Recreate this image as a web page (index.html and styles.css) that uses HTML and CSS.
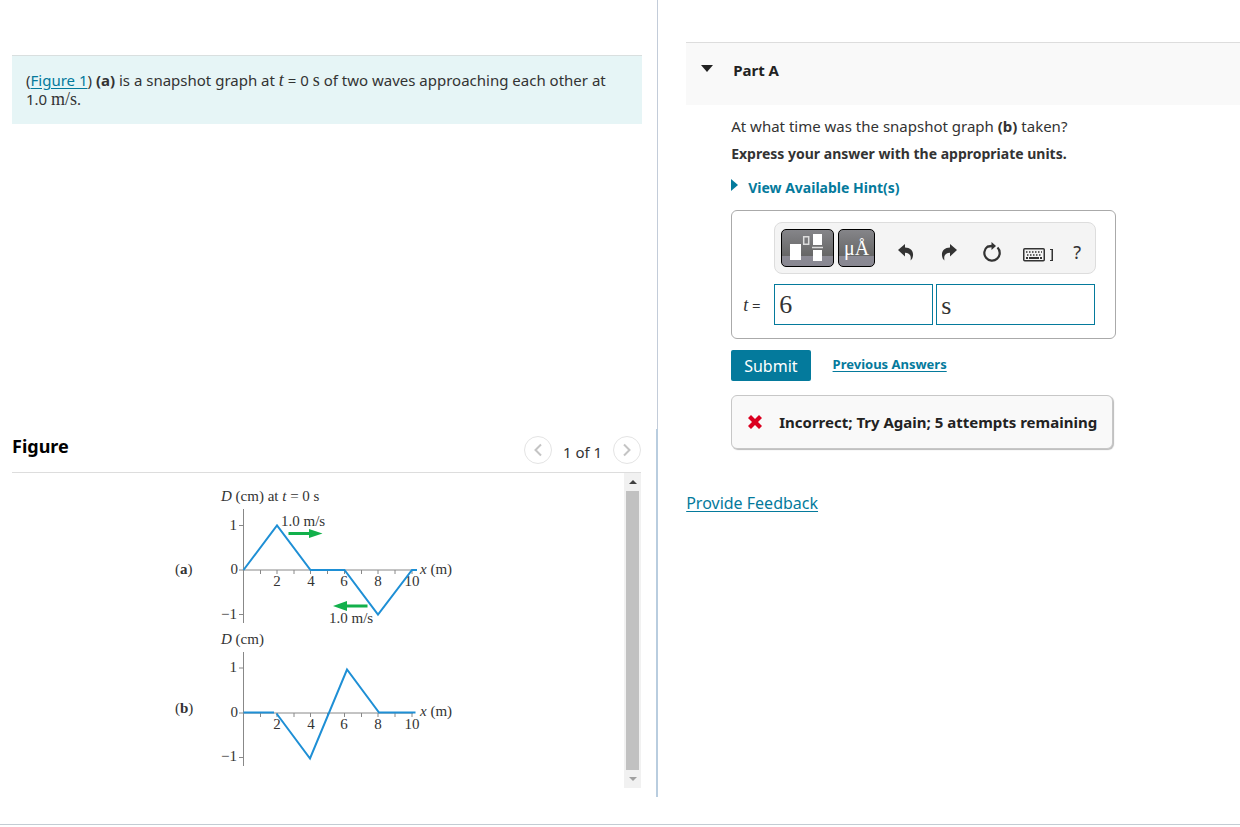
FILE: index.html
```html
<!DOCTYPE html>
<html lang="en">
<head>
  <meta charset="UTF-8" />
  <meta name="viewport" content="width=device-width, initial-scale=1" />
  <title>Part A</title>
  <link rel="stylesheet" href="styles.css">
</head>
<body>
  <div class="page">
    <!-- Left: problem text and figure -->
    <div class="left-pane">
      <section class="problem">
        <p class="intro">(<a href="#figure">Figure 1</a>) <b>(a)</b> is a snapshot graph at <i class="math">t</i> = 0 <span class="math">s</span> of two waves approaching each other at 1.0 <span class="math">m/s</span>.</p>
      </section>

      <section class="figure-panel" id="figure">
        <header class="figure-header">
          <h2>Figure</h2>
          <nav class="pager">
            <button type="button" aria-label="Previous figure">
              <svg width="10" height="14" viewBox="0 0 10 14"><path d="M8 1.5 2.5 7 8 12.5" /></svg>
            </button>
            <span>1 of 1</span>
            <button type="button" aria-label="Next figure">
              <svg width="10" height="14" viewBox="0 0 10 14"><path d="M2 1.5 7.5 7 2 12.5" /></svg>
            </button>
          </nav>
        </header>
        <div class="figure-view">
          <div class="figure-image">
            <svg class="graph" width="300" height="300" viewBox="0 0 300 300" role="img" aria-label="Snapshot graphs of two waves">
              <!-- (a) -->
              <g class="axis">
                <path d="M73.5 29V143M69 45.5h4M69 90H243M69 134.5h4" />
                <path d="M90.5 90v4M107 90v4M124 90v4M140.5 90v4M157.5 90v4M174.5 90v4M191.5 90v4M208 90v4M225 90v4M242 90v4" />
              </g>
              <g class="label">
                <text x="51" y="21"><tspan class="it">D</tspan> (cm) at <tspan class="it">t</tspan> = 0 s</text>
                <text x="5" y="94">(<tspan class="bold">a</tspan>)</text>
                <text x="250" y="94"><tspan class="it">x</tspan> (m)</text>
                <text x="111" y="46">1.0 m/s</text>
                <text x="159" y="143">1.0 m/s</text>
                <g text-anchor="end">
                  <text x="67" y="50">1</text>
                  <text x="68" y="94">0</text>
                  <text x="67" y="139">−1</text>
                </g>
                <g text-anchor="middle">
                  <text x="107" y="106">2</text>
                  <text x="141" y="106">4</text>
                  <text x="174" y="106">6</text>
                  <text x="208" y="106">8</text>
                  <text x="242" y="106">10</text>
                </g>
              </g>
              <path class="wave" d="M73.5 90 107 45.5 140.5 90H174.5L208 134.5 242 90H247" />
              <path class="arrow" d="M118.5 52H139V49L152.5 53.5 139 58V55H118.5Z" />
              <path class="arrow" d="M197.5 124.5H177V121L163 126 177 131V127.5H197.5Z" />

              <!-- (b) -->
              <g class="axis">
                <path d="M73.5 172V286M69 188h4M69 233H243M69 277.5h4" />
                <path d="M90.5 233v4M107 233v4M124 233v4M140.5 233v4M157.5 233v4M174.5 233v4M191.5 233v4M208 233v4M225 233v4M242 233v4" />
              </g>
              <g class="label">
                <text x="51" y="164"><tspan class="it">D</tspan> (cm)</text>
                <text x="5" y="233">(<tspan class="bold">b</tspan>)</text>
                <text x="250" y="236"><tspan class="it">x</tspan> (m)</text>
                <g text-anchor="end">
                  <text x="67" y="192">1</text>
                  <text x="68" y="237">0</text>
                  <text x="67" y="281">−1</text>
                </g>
                <g text-anchor="middle">
                  <text x="107" y="249">2</text>
                  <text x="141" y="249">4</text>
                  <text x="174" y="249">6</text>
                  <text x="208" y="249">8</text>
                  <text x="242" y="249">10</text>
                </g>
              </g>
              <path class="wave" d="M73.5 232.5H104M106.5 233.5 140 278.5 177 189.5 209 232.5H245.5" />
            </svg>
          </div>
          <div class="scrollbar" aria-hidden="true">
            <span class="scroll-end"><svg width="8" height="4" viewBox="0 0 8 4"><path d="M0 4 4 0 8 4Z" fill="#404040" /></svg></span>
            <span class="scroll-thumb"></span>
            <span class="scroll-end"><svg width="8" height="4" viewBox="0 0 8 4"><path d="M0 0 4 4 8 0Z" fill="#a0a0a0" /></svg></span>
          </div>
        </div>
      </section>
    </div>

    <!-- Right: question part -->
    <main class="right-pane">
      <header class="part-header">
        <svg width="12" height="7" viewBox="0 0 12 7"><path d="M0 0H12L6 7Z" fill="#222" /></svg>
        <h1>Part A</h1>
      </header>

      <div class="part-body">
        <p class="question">At what time was the snapshot graph <b>(b)</b> taken?</p>
        <p><b>Express your answer with the appropriate units.</b></p>
        <a class="hints" href="#hints">
          <svg width="7" height="12" viewBox="0 0 7 12"><path d="M0 0 7 6 0 12Z" fill="#047a9c" /></svg>
          View Available Hint(s)
        </a>

        <form class="answer" id="answer">
          <div class="toolbar">
            <button type="button" class="key key-wide" aria-label="Templates">
              <svg width="36" height="28" viewBox="0 0 36 28">
                <path d="M0 10H11V26H0ZM23 0H32V11H23ZM23 16H32V27H23Z" fill="#fff" />
                <path d="M13.7 2.7h5v7.600h-5ZM22 13.5H33" fill="none" stroke="#ddd" stroke-width="1.5" />
              </svg>
            </button>
            <button type="button" class="key" aria-label="Units">μÅ</button>
            <button type="button" class="tool" aria-label="Undo">
              <svg width="16" height="18" viewBox="0 0 16 18"><path d="M0 7 7 1V4.5C12.5 4.5 15.5 8 15 12.5 14.8 14.5 14 16.5 12.5 17.5 13.5 13 12 10 7 9.8V13.5Z" /></svg>
            </button>
            <button type="button" class="tool" aria-label="Redo">
              <svg width="16" height="18" viewBox="0 0 16 18"><path d="M16 7 9 1V4.5C3.5 4.5.5 8 1 12.5 1.2 14.5 2 16.5 3.5 17.5 2.5 13 4 10 9 9.8V13.5Z" /></svg>
            </button>
            <button type="button" class="tool" aria-label="Reset">
              <svg width="20" height="20" viewBox="0 0 20 20"><path d="M5.5 4.7A7.7 7.7 0 1 0 15.5 5.5" fill="none" stroke="#333" stroke-width="2.2" /><path d="M9.500 0 14 4 9.500 8V5.200L5 6V3.500L9.500 2.800Z" /></svg>
            </button>
            <button type="button" class="tool tool-keys" aria-label="Keyboard shortcuts">
              <svg width="30" height="14" viewBox="0 0 30 14">
                <rect x=".75" y=".75" width="20.500" height="12" rx="1" fill="none" stroke="#333" stroke-width="1.5" />
                <path d="M3 4H19M4 7H18" fill="none" stroke="#333" stroke-width="1.5" stroke-dasharray="1.500 1.500" />
                <path d="M3 9h2v2H3ZM6 9h10v2H6ZM17 9h2v2h-2ZM27 1h3v12h-3v-1h1.500V2H27Z" />
              </svg>
            </button>
            <button type="button" class="tool tool-help" aria-label="Help">?</button>
          </div>
          <label for="value"><i class="math">t</i> =</label>
          <div class="fields">
            <input id="value" class="value" type="text" value="6">
            <input class="unit" type="text" value="s" aria-label="Units">
          </div>
        </form>

        <div class="actions">
          <button type="submit" form="answer" class="submit">Submit</button>
          <a href="#previous">Previous Answers</a>
        </div>

        <div class="feedback" role="status">
          <svg width="16" height="16" viewBox="0 0 16 16"><path d="M4 1 8 5 12 1 15 4 11 8 15 12 12 15 8 11 4 15 1 12 5 8 1 4Z" /></svg>
          Incorrect; Try Again; 5 attempts remaining
        </div>
      </div>

      <a class="provide" href="#feedback">Provide Feedback</a>
    </main>
  </div>
</body>
</html>
```

FILE: styles.css
```css
*, *::before, *::after {
  box-sizing: border-box;
}

body {
  margin: 0;
  background: #fff;
  color: #333;
  font: 14px/20px "Noto Sans", "Open Sans", sans-serif;
}

h1, h2, p {
  margin: 0;
}

a {
  color: #047a9c;
  text-underline-offset: 2px;
}

button {
  font-family: inherit;
  cursor: pointer;
}

.math {
  font-family: "Liberation Serif", serif;
  font-size: 18px;
  line-height: 16px;
}

.page {
  display: flex;
  min-height: 825px;
  border-bottom: 1px solid #c3ccd3;
}

/* Left pane */
.left-pane {
  flex: 0 0 53%;
}

.problem {
  min-height: 429px;
  padding: 55px 15px 0 12px;
  border-right: 1px solid #c3ccd9;
  margin-right: -1px;
}

.intro {
  padding: 15px 20px 15px 14px;
  border-top: 1px solid #d9dfdf;
  background: #e6f5f6;
  font-size: 15px;
  line-height: 19px;
}

.figure-panel {
  padding: 0 15px 9px 12px;
  border-right: 2px solid #b9cddf;
  margin-right: -1px;
}

.figure-header {
  display: flex;
  align-items: center;
  justify-content: space-between;
  height: 44px;
  padding-bottom: 2px;
  border-bottom: 1px solid #ddd;
}

.figure-header h2 {
  padding-bottom: 8px;
  color: #000;
  font-size: 18px;
  line-height: 24px;
}

.pager {
  display: flex;
  align-items: center;
  gap: 11px;
  font-size: 15px;
}

.pager span {
  padding-top: 4px;
}

.pager button {
  display: grid;
  place-items: center;
  width: 28px;
  height: 28px;
  padding: 0;
  border: 1px solid #e4e4e4;
  border-radius: 50%;
  background: #fff;
}

.pager path {
  fill: none;
  stroke: #c4c4c4;
  stroke-width: 2;
}

.figure-view {
  display: flex;
}

.figure-image {
  flex: 1;
  display: flex;
  justify-content: center;
  padding: 7px 0 0 4px;
}

.scrollbar {
  display: flex;
  flex-direction: column;
  width: 17px;
  height: 315px;
  background: #f1f1f1;
}

.scroll-end {
  display: grid;
  place-items: center;
  height: 18px;
}

.scroll-thumb {
  flex: 1;
  margin: 0 2px;
  background: #c1c1c1;
}

/* Graphs */
.axis path {
  fill: none;
  stroke: #888;
}

.label {
  fill: #333;
  font: 15px "Liberation Serif", serif;
}

.it {
  font-style: italic;
}

.bold {
  font-weight: bold;
}

.wave {
  fill: none;
  stroke: #1e8fd5;
  stroke-width: 2;
}

.arrow {
  fill: #12b04b;
}

/* Right pane */
.right-pane {
  flex: 1;
  padding: 42px 0 40px 29px;
}

.part-header {
  display: flex;
  gap: 20px;
  height: 63px;
  padding: 17px 15px;
  border-top: 1px solid #ddd;
  background: #f9f9f9;
  color: #222;
}

.part-header svg {
  margin-top: 5px;
}

.part-header h1 {
  font-size: 15px;
  line-height: 20px;
}

.part-body {
  display: flex;
  flex-direction: column;
  align-items: flex-start;
  padding: 11px 20px 0 45px;
}

.part-body p {
  margin-bottom: 8px;
}

.question {
  font-size: 15px;
}

.hints {
  display: flex;
  gap: 10px;
  margin-bottom: 6px;
  padding: 6px 0;
  font-weight: bold;
  text-decoration: none;
}

.hints svg {
  margin-top: 1px;
}

.answer {
  display: grid;
  grid-template-columns: 31px auto;
  gap: 10px 0;
  align-items: center;
  padding: 11px 19px 13px 11px;
  border: 1px solid #aaa;
  border-radius: 6px;
}

.answer label {
  font-size: 15px;
}

.toolbar {
  grid-column: 2;
  display: flex;
  align-items: center;
  height: 52px;
  padding: 0 6px;
  border: 1px solid #ddd;
  border-radius: 8px;
  background: #f4f4f4;
}

.key {
  display: grid;
  place-items: center;
  width: 37px;
  height: 38px;
  margin-right: 4px;
  padding: 0;
  border: 1px solid #000;
  border-radius: 5px;
  background: linear-gradient(#858589, #666 72%, #8b8a94 73%, #888791);
  color: #fff;
  font: 20px "Liberation Serif", serif;
}

.key-wide {
  width: 53px;
}

.tool {
  display: grid;
  place-items: center;
  width: 43px;
  height: 38px;
  padding: 8px 0 0;
  border: 0;
  background: none;
  color: #333;
}

.key + .tool {
  margin-left: 5px;
}

.tool svg {
  fill: #333;
}

.tool-keys {
  width: 50px;
  padding-top: 14px;
}

.tool-help {
  width: 24px;
  margin-left: 2px;
  font-size: 18px;
}

.fields {
  display: flex;
  gap: 3px;
}

.fields input {
  width: 159px;
  height: 41px;
  padding: 0 4px;
  border: 1px solid #047a9c;
  border-radius: 0;
  background: #fff;
  color: #333;
  font: 26px "Liberation Serif", serif;
}

.fields .unit {
  padding-top: 3px;
}

.actions {
  display: flex;
  gap: 22px;
  margin: 11px 0 14px;
}

.submit {
  height: 31px;
  padding: 0 13px;
  border: 0;
  border-radius: 2px;
  background: #047a9c;
  color: #fff;
  font-size: 16px;
}

.actions a {
  padding-top: 4px;
  font-size: 13px;
  font-weight: bold;
}

.feedback {
  display: flex;
  align-items: center;
  gap: 16px;
  height: 54px;
  padding: 0 15px;
  border: 1px solid #c7c7c7;
  border-radius: 6px;
  background: #f9f9f9;
  box-shadow: 1px 1px 1px #bbb;
  color: #222;
  font-size: 15px;
  font-weight: bold;
}

.feedback path {
  fill: #db0020;
}

.provide {
  display: inline-block;
  margin-top: 44px;
  font-size: 16px;
}
```
